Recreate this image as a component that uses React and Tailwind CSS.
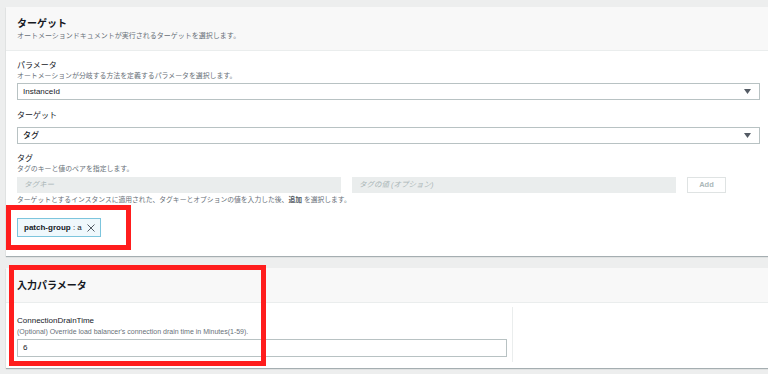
import React from "react";

const font = { fontFamily: '"Liberation Sans", "Noto Sans CJK JP", sans-serif' };

function Caret() {
  return (
    <svg width="7" height="5" viewBox="0 0 7 5" className="shrink-0">
      <path d="M0 0 H7 L3.5 5 Z" fill="#545b64" />
    </svg>
  );
}

function Select({ value }) {
  return (
    <div className="flex h-[17px] items-center justify-between border border-[#b8c2c3] bg-white pl-[5px] pr-[8px]">
      <span className="text-[8px] leading-[10px] font-medium text-[#16191f]">{value}</span>
      <Caret />
    </div>
  );
}

function Label({ children }) {
  return <div className="text-[8px] leading-[10px] text-[#16191f]">{children}</div>;
}

function Desc({ children }) {
  return <div className="text-[6.9px] leading-[9px] text-[#687078]">{children}</div>;
}

export default function App() {
  return (
    <div
      style={font}
      className="relative h-[374px] w-[768px] overflow-hidden bg-[#edeeee] pt-[7px]"
    >
      {/* Card 1 */}
      <div className="ml-[6px] w-[765px] bg-white shadow-[0_1px_1px_0_rgba(0,28,36,0.3)]">
        <div className="h-[44px] border-b border-[#eaeded] bg-[#f8f8f8] px-[11px] pt-[10px]">
          <div className="text-[10px] leading-[14px] font-bold text-[#16191f]">ターゲット</div>
          <div className="text-[7px] leading-[10px] text-[#687078]">
            オートメーションドキュメントが実行されるターゲットを選択します。
          </div>
        </div>
        <div className="px-[11px] pt-[10px] pb-[19px]">
          <Label>パラメータ</Label>
          <Desc>オートメーションが分岐する方法を定義するパラメータを選択します。</Desc>
          <div className="mt-[3px]">
            <Select value="InstanceId" />
          </div>

          <div className="mt-[11px]">
            <Label>ターゲット</Label>
          </div>
          <div className="mt-[6px]">
            <Select value="タグ" />
          </div>

          <div className="mt-[10px]">
            <Label>タグ</Label>
          </div>
          <div className="text-[6.9px] leading-[10px] text-[#687078]">タグのキーと値のペアを指定します。</div>
          <div className="mt-[3px] flex gap-[11px]">
            <div className="flex h-[16px] w-[324px] items-center bg-[#eaeded] px-[7px] text-[7.5px] italic text-[#aab7b8]">
              タグキー
            </div>
            <div className="flex h-[16px] w-[324px] items-center bg-[#eaeded] px-[7px] text-[7.5px] italic text-[#aab7b8]">
              タグの値 (オプション)
            </div>
            <div className="flex h-[16px] w-[39px] items-center justify-center border border-[#dfe3e3] bg-white text-[7.5px] font-bold text-[#aab7b8]">
              Add
            </div>
          </div>
          <div className="mt-[2px] text-[6.8px] leading-[10px] text-[#687078]">
            ターゲットとするインスタンスに適用された、タグキーとオプションの値を入力した後、
            <span className="font-bold text-[#545b64]">追加</span> を選択します。
          </div>
          <div className="mt-[13px] flex">
            <div className="flex h-[19px] items-center gap-[5px] border border-[#7cc5dd] bg-[#eff8fc] pl-[6px] pr-[5px]">
              <span className="text-[8px] leading-[10px] text-[#16191f]">
                <span className="font-bold">patch-group</span> : a
              </span>
              <svg width="8" height="8" viewBox="0 0 8 8">
                <path d="M0.5 0.5 L7.5 7.5 M7.5 0.5 L0.5 7.5" stroke="#545b64" strokeWidth="1" />
              </svg>
            </div>
          </div>
        </div>
      </div>

      {/* Card 2 */}
      <div className="mt-[12px] ml-[6px] w-[765px] bg-white shadow-[0_1px_1px_0_rgba(0,28,36,0.3)]">
        <div className="h-[35px] border-b border-[#eaeded] bg-[#f8f8f8] px-[11px] pt-[11px]">
          <div className="text-[10px] leading-[14px] font-bold text-[#16191f]">入力パラメータ</div>
        </div>
        <div className="flex pt-[4px] pb-[6px]">
          <div className="w-[507px] border-r border-[#eaeded] pl-[11px] pr-[5px] pt-[9px] pb-[5px]">
            <Label>ConnectionDrainTime</Label>
            <div className="mt-[1px] text-[7px] leading-[9px] text-[#687078]">
              (Optional) Override load balancer's connection drain time in Minutes(1-59).
            </div>
            <div className="mt-[3px] flex h-[18px] items-center border border-[#b8c2c3] bg-white pl-[5px]">
              <span className="text-[8px] leading-[10px] text-[#16191f]">6</span>
            </div>
          </div>
          <div className="flex-1" />
        </div>
      </div>

      {/* Annotation boxes */}
      <div className="absolute left-[6px] top-[205px] h-[45px] w-[125px] border-[5px] border-[#ff1d1d]" />
      <div className="absolute left-[9px] top-[265px] h-[101px] w-[257px] border-[5px] border-[#ff1d1d]" />
    </div>
  );
}
